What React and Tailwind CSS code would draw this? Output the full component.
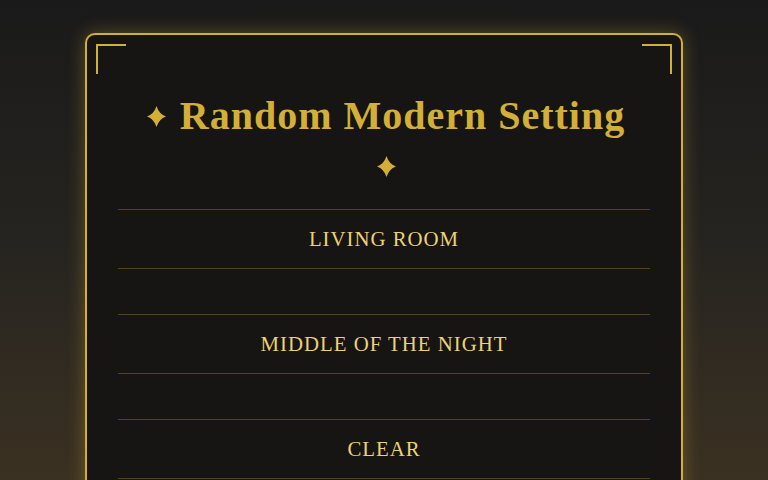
import React from 'react';

const rows = ['Living Room', 'Middle of the Night', 'Clear'];

function Star({ className = '' }) {
  return (
    <svg viewBox="0 0 20 22" className={`inline-block h-[21px] w-[19px] align-[2px] ${className}`} fill="#d4af37">
      <path d="M10 0 Q12.6 8.4 20 11 Q12.6 13.6 10 22 Q7.4 13.6 0 11 Q7.4 8.4 10 0 Z" />
    </svg>
  );
}

export default function App() {
  return (
    <div
      className="h-screen overflow-hidden bg-gradient-to-b from-[#1a1a1a] via-[#262420] to-[#3b3122] pt-[33px]"
      style={{ fontFamily: '"Liberation Serif", "Times New Roman", serif' }}
    >
      <div className="relative mx-auto w-[598px] min-h-[520px] rounded-[10px] border-2 border-[#d4af37] bg-[#161514] px-[31px] pt-[56px] shadow-[0_0_18px_rgba(212,175,55,0.35)]">
        {/* corner ornaments */}
        <div className="absolute left-[9px] top-[9px] h-[30px] w-[30px] border-l-2 border-t-2 border-[#d4af37]" />
        <div className="absolute right-[9px] top-[9px] h-[30px] w-[30px] border-r-2 border-t-2 border-[#d4af37]" />

        <h1 className="pl-[22px] pr-[18px] text-center text-[40px] font-bold leading-[50px] tracking-[1px] text-[#d4af37]">
          <Star className="mr-[3px]" />{' '}
          Random Modern Setting{' '}
          <Star />
        </h1>

        <div className="mt-[18px] flex flex-col gap-[45px]">
          {rows.map(r => (
            <div
              key={r}
              className="flex h-[60px] items-center justify-center border-y border-[#d4af37]/30 text-[20.8px] uppercase tracking-[1px] text-[#ecd275]"
            >
              {r}
            </div>
          ))}
        </div>
      </div>
    </div>
  );
}
